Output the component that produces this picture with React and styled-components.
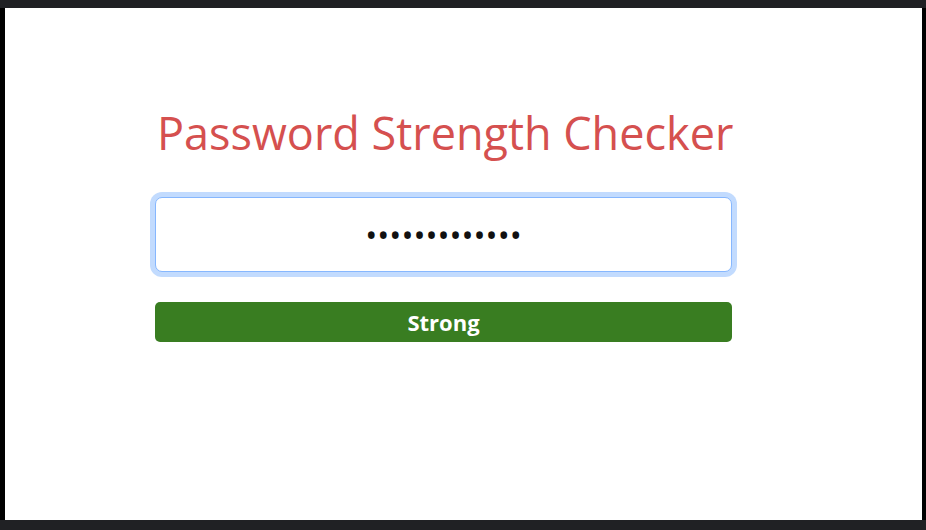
import React, { useState } from "react";
import styled, { createGlobalStyle } from "styled-components";

const Global = createGlobalStyle`
  html, body { margin: 0; padding: 0; background: #202124; }
  #root { height: 530px; }
  * { box-sizing: border-box; }
`;

const Screen = styled.div`
  height: 530px;
  width: 926px;
  background: #202124;
  padding: 8px 0 10px;
  display: flex;
`;

const Viewport = styled.main`
  flex: 1;
  background: #ffffff;
  border-left: 5px solid #000;
  border-right: 4px solid #000;
  padding: 97px 0 0 150px;
  font-family: "Open Sans", "Noto Sans", sans-serif;
`;

const Panel = styled.section`
  width: 577px;
  display: flex;
  flex-direction: column;
  align-items: stretch;
`;

const Title = styled.h1`
  margin: 0 0 0 2px;
  font-weight: 400;
  font-size: 45px;
  line-height: 56px;
  color: #d5504f;
  letter-spacing: 0;
  white-space: nowrap;
`;

const Field = styled.input`
  margin-top: 36px;
  height: 75px;
  width: 100%;
  border: 1px solid #86b7fe;
  border-radius: 7px;
  box-shadow: 0 0 0 5px rgba(13, 110, 253, 0.25);
  outline: none;
  text-align: center;
  font-family: "Open Sans", sans-serif;
  font-size: 32px;
  color: #111;
  caret-color: #222;
  background: #fff;
`;

const Meter = styled.div`
  margin-top: 30px;
  height: 40px;
  border-radius: 5px;
  background: ${(p) => p.$color};
  color: #fff;
  font-weight: 700;
  font-size: 22px;
  display: flex;
  align-items: center;
  justify-content: center;
`;

export default function App() {
  const [pw, setPw] = useState("Abc#12345xyz!");
  return (
    <>
      <Global />
      <Screen>
        <Viewport>
          <Panel>
            <Title>Password Strength Checker</Title>
            <Field
              type="password"
              value={pw}
              onChange={(e) => setPw(e.target.value)}
              autoFocus
            />
            <Meter $color="#397d21">Strong</Meter>
          </Panel>
        </Viewport>
      </Screen>
    </>
  );
}
